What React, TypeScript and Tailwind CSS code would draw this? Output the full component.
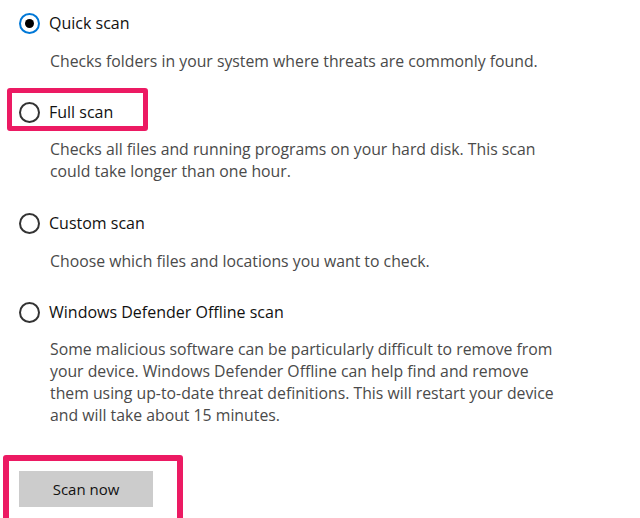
import React from "react";

function Radio({ checked }: { checked?: boolean }) {
  return (
    <span
      className={
        "flex h-[21px] w-[21px] shrink-0 items-center justify-center rounded-full border-2 " +
        (checked ? "border-[#0078d7]" : "border-[#333333]")
      }
    >
      {checked && <span className="h-[9px] w-[9px] rounded-full bg-black" />}
    </span>
  );
}

function Option({
  label,
  checked,
  highlight,
  children,
  descTop,
  gapTop,
}: {
  label: string;
  checked?: boolean;
  highlight?: boolean;
  children: React.ReactNode;
  descTop: string;
  gapTop: string;
}) {
  return (
    <div className={gapTop}>
      <div className="relative flex h-[22px] items-center gap-[9px]">
        <Radio checked={checked} />
        <span className="text-[16px] leading-[22px] text-[#111111]">{label}</span>
        {highlight && (
          <span className="pointer-events-none absolute -left-[12px] -top-[13px] h-[43px] w-[141px] rounded-[3px] border-[5px] border-[#ec1a63]" />
        )}
      </div>
      <p className={"pl-[31px] text-[15.8px] leading-[22px] text-[#4a4a4a] " + descTop}>{children}</p>
    </div>
  );
}

export default function App() {
  return (
    <div
      className="h-[518px] w-[640px] overflow-hidden bg-white pl-[19px] pt-[12px]"
      style={{ fontFamily: '"Open Sans", "Noto Sans", sans-serif' }}
    >
      <div className="w-[600px]">
        <Option label="Quick scan" checked descTop="mt-[16px]" gapTop="">
          Checks folders in your system where threats are commonly found.
        </Option>
        <Option label="Full scan" highlight descTop="mt-[15px]" gapTop="mt-[29px]">
          Checks all files and running programs on your hard disk. This scan
          <br />
          could take longer than one hour.
        </Option>
        <Option label="Custom scan" descTop="mt-[16px]" gapTop="mt-[30px]">
          Choose which files and locations you want to check.
        </Option>
        <Option label="Windows Defender Offline scan" descTop="mt-[15px]" gapTop="mt-[29px]">
          Some malicious software can be particularly difficult to remove from
          <br />
          your device. Windows Defender Offline can help find and remove
          <br />
          them using up-to-date threat definitions. This will restart your device
          <br />
          and will take about 15 minutes.
        </Option>
        <div className="relative mt-[45px] w-fit">
          <button className="flex h-[36px] w-[134px] items-center justify-center bg-[#cccccc] text-[15px] text-[#111111]">
            Scan now
          </button>
          <span className="pointer-events-none absolute -left-[16px] -top-[16px] h-[70px] w-[180px] rounded-[3px] border-[6px] border-[#ec1a63]" />
        </div>
      </div>
    </div>
  );
}
